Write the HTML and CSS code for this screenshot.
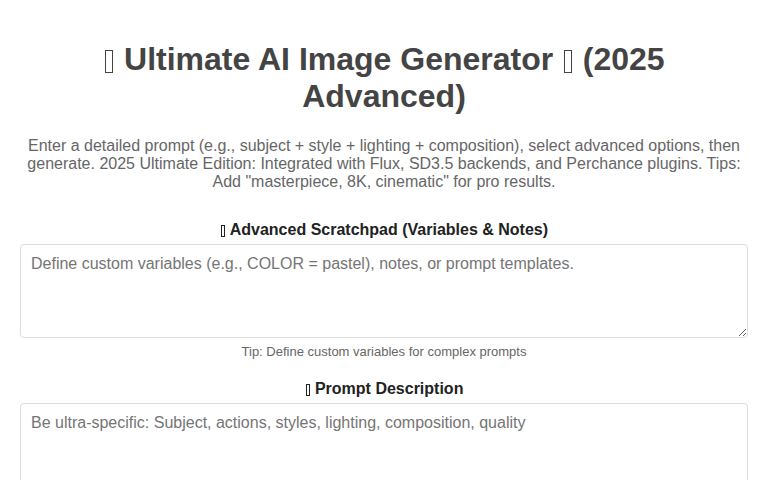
FILE: index.html
```html
<!DOCTYPE html>
<html lang="en">
<head>
  <meta charset="UTF-8" />
  <meta name="viewport" content="width=device-width, initial-scale=1.0" />
  <title>Ultimate AI Image Generator</title>
  <link rel="stylesheet" href="styles.css">
</head>
<body>
  <div class="container">
    <h1><span class="tofu"></span> Ultimate AI Image Generator <span class="tofu"></span> (2025 Advanced)</h1>
    <p class="intro">Enter a detailed prompt (e.g., subject + style + lighting + composition), select advanced options, then generate. 2025 Ultimate Edition: Integrated with Flux, SD3.5 backends, and Perchance plugins. Tips: Add "masterpiece, 8K, cinematic" for pro results.</p>

    <div class="field">
      <label for="scratchpad"><span class="tofu"></span> Advanced Scratchpad (Variables &amp; Notes)</label>
      <textarea id="scratchpad" rows="4" placeholder="Define custom variables (e.g., COLOR = pastel), notes, or prompt templates."></textarea>
      <div class="hint">Tip: Define custom variables for complex prompts</div>
    </div>

    <div class="field">
      <label for="prompt"><span class="tofu"></span> Prompt Description</label>
      <textarea id="prompt" rows="5" placeholder="Be ultra-specific: Subject, actions, styles, lighting, composition, quality"></textarea>
    </div>
  </div>
</body>
</html>
```

FILE: styles.css
```css
body {
  margin: 0;
  font-family: "Liberation Sans", Arial, sans-serif;
  background-color: #fff;
  color: #333;
}
.container {
  padding: 20px;
}
h1 {
  text-align: center;
  font-size: 32px;
  color: #444;
  margin: 21px 0 22px;
}
/* missing emoji glyph box */
.tofu {
  display: inline-block;
  box-sizing: border-box;
  width: 0.25em;
  height: 0.72em;
  margin: 0 0.06em;
  border: 1px solid currentColor;
  vertical-align: -0.1em;
}
.intro {
  text-align: center;
  font-size: 16px;
  color: #666;
  margin: 0 0 30px;
}
.field {
  margin-bottom: 21px;
  text-align: center;
}
.field label {
  display: block;
  font-weight: bold;
  font-size: 16px;
  color: #222;
  margin-bottom: 5px;
}
textarea {
  display: block;
  box-sizing: border-box;
  width: 100%;
  height: 94px;
  padding: 10px;
  font-family: "Liberation Sans", Arial, sans-serif;
  font-size: 16px;
  color: #333;
  border: 1px solid #ddd;
  border-radius: 4px;
}
textarea::placeholder {
  color: #757575;
}
#prompt {
  height: 120px;
}
.hint {
  font-size: 13px;
  color: #666;
  margin-top: 6px;
}
```
